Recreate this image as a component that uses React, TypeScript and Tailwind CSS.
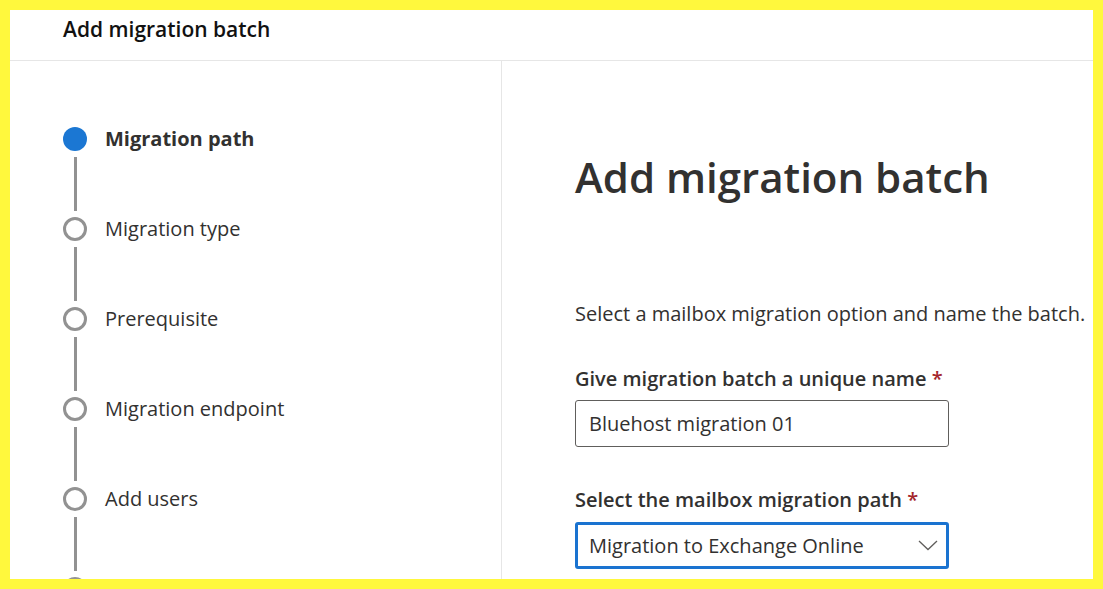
const steps = [
  { label: 'Migration path', active: true },
  { label: 'Migration type', active: false },
  { label: 'Prerequisite', active: false },
  { label: 'Migration endpoint', active: false },
  { label: 'Add users', active: false },
  { label: '', active: false },
];

function StepList() {
  return (
    <div className="flex flex-col pl-[53px] pt-[66px]">
      {steps.map((step, i) => (
        <div key={i} className="flex flex-col">
          <div className="flex items-center h-[24px]">
            {step.active ? (
              <div className="w-[24px] h-[24px] rounded-full bg-[#1b77d3] shrink-0" />
            ) : (
              <div className="w-[24px] h-[24px] rounded-full border-[3px] border-[#929292] bg-white shrink-0" />
            )}
            {step.label && (
              <span
                className={`ml-[18px] text-[20px] text-[#323130] whitespace-nowrap ${
                  step.active ? 'font-bold' : 'font-normal'
                }`}
              >
                {step.label}
              </span>
            )}
          </div>
          {i < steps.length - 1 && (
            <div className="w-[24px] flex justify-center py-[6px]">
              <div className="w-[3px] h-[54px] bg-[#929292]" />
            </div>
          )}
        </div>
      ))}
    </div>
  );
}

export default function App() {
  return (
    <div
      className="w-[1103px] h-[589px] bg-[#fff83d] p-[10px] overflow-hidden"
      style={{ fontFamily: '"Open Sans", "Noto Sans", sans-serif' }}
    >
      <div className="w-full h-full bg-white flex flex-col overflow-hidden">
        <header className="h-[51px] shrink-0 border-b border-[#e6e6e6] flex items-center pl-[53px] pb-[12px]">
          <h1 className="text-[21px] leading-[28px] font-semibold text-[#111]">Add migration batch</h1>
        </header>
        <div className="flex flex-1 min-h-0">
          <aside className="w-[492px] shrink-0 border-r border-[#e6e6e6] overflow-hidden">
            <StepList />
          </aside>
          <main className="flex-1 pl-[73px] pt-[88px] overflow-hidden">
            <h2 className="text-[42px] leading-[56px] font-semibold text-[#323130] whitespace-nowrap">
              Add migration batch
            </h2>
            <p className="mt-[96px] text-[20px] leading-[26px] text-[#323130] whitespace-nowrap">
              Select a mailbox migration option and name the batch.
            </p>
            <div className="mt-[39px] w-[374px]">
              <label className="block text-[20px] leading-[26px] font-semibold text-[#323130] whitespace-nowrap">
                Give migration batch a unique name <span className="text-[#a4262c]">*</span>
              </label>
              <div className="mt-[8px] h-[47px] border border-[#605e5c] rounded-[3px] flex items-center px-[13px]">
                <span className="text-[20px] text-[#323130]">Bluehost migration 01</span>
              </div>
            </div>
            <div className="mt-[40px] w-[374px]">
              <label className="block text-[20px] leading-[26px] font-semibold text-[#323130] whitespace-nowrap">
                Select the mailbox migration path <span className="text-[#a4262c]">*</span>
              </label>
              <div className="mt-[9px] h-[47px] border-[3px] border-[#1a73d0] rounded-[3px] flex items-center justify-between pl-[11px] pr-[8px]">
                <span className="text-[20px] text-[#323130]">Migration to Exchange Online</span>
                <svg width="20" height="11" viewBox="0 0 20 11" fill="none" className="shrink-0">
                  <polyline points="1,1 10,9.5 19,1" stroke="#605e5c" strokeWidth="1.3" />
                </svg>
              </div>
            </div>
          </main>
        </div>
      </div>
    </div>
  );
}
